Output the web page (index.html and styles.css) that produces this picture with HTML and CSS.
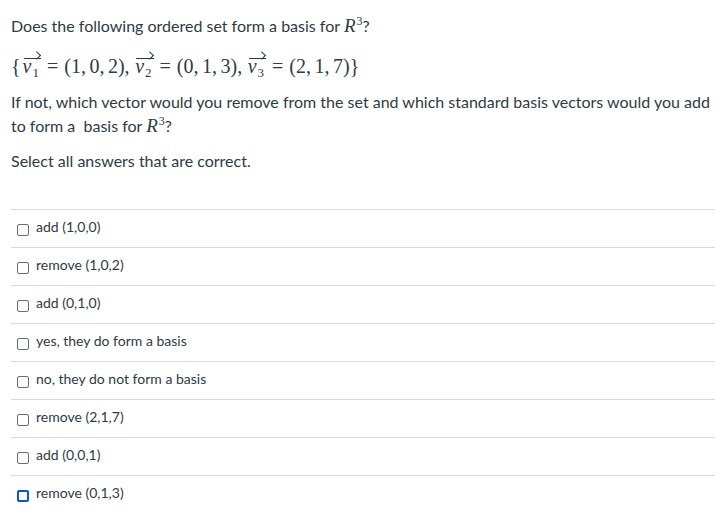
FILE: index.html
```html
<!DOCTYPE html>
<html>
<head>
<meta charset="utf-8">
<link rel="stylesheet" href="styles.css">
</head>
<body>
<div class="quiz">
  <p class="q-line">Does the following ordered set form a basis for <span class="math"><i>R</i><sup>3</sup></span>?</p>
  <p class="math-line math">{<span class="vec"><i>v</i><sub>1</sub></span><span class="eq">=</span>(1,<span class="th"></span>0,<span class="th"></span>2),<span class="th"></span><span class="vec"><i>v</i><sub>2</sub></span><span class="eq">=</span>(0,<span class="th"></span>1,<span class="th"></span>3),<span class="th"></span><span class="vec"><i>v</i><sub>3</sub></span><span class="eq">=</span>(2,<span class="th"></span>1,<span class="th"></span>7)}</p>
  <p class="q-para">If not, which vector would you remove from the set and which standard basis vectors would you add to form a&nbsp; basis for <span class="math"><i>R</i><sup>3</sup></span>?</p>
  <p class="q-select">Select all answers that are correct.</p>
  <ul class="answers">
    <li class="answer"><span class="box"></span><span class="label">add (1,0,0)</span></li>
    <li class="answer"><span class="box"></span><span class="label">remove (1,0,2)</span></li>
    <li class="answer"><span class="box"></span><span class="label">add (0,1,0)</span></li>
    <li class="answer"><span class="box"></span><span class="label">yes, they do form a basis</span></li>
    <li class="answer"><span class="box"></span><span class="label">no, they do not form a basis</span></li>
    <li class="answer"><span class="box"></span><span class="label">remove (2,1,7)</span></li>
    <li class="answer"><span class="box"></span><span class="label">add (0,0,1)</span></li>
    <li class="answer"><span class="box focus"></span><span class="label">remove (0,1,3)</span></li>
  </ul>
</div>
</body>
</html>
```

FILE: styles.css
```css
html, body {
  margin: 0;
  padding: 0;
  background: #ffffff;
}
body {
  font-family: Lato, "Liberation Sans", sans-serif;
  color: #2d3b45;
}
.quiz {
  padding: 14px 10px 0 11px;
}
p {
  margin: 0;
}
.q-line {
  font-size: 16px;
  line-height: 24px;
}
.math {
  font-family: "Liberation Serif", "DejaVu Serif", serif;
  font-size: 19px;
}
.math i {
  font-style: italic;
}
.math sup {
  font-size: 12px;
  line-height: 0;
  font-style: normal;
  margin-left: 1px;
}
.math sub {
  font-size: 13px;
  line-height: 0;
  font-style: normal;
  margin-left: 1px;
  vertical-align: -4px;
}
.math-line {
  margin-top: 16px;
  line-height: 24px;
  font-size: 20px;
  color: #2d3b45;
  white-space: nowrap;
}
.eq {
  display: inline-block;
  margin: 0 6px 0 7px;
}
.th {
  display: inline-block;
  width: 3.5px;
}
.vec {
  position: relative;
  display: inline-block;
  margin-left: 2px;
  margin-right: 1px;
}
.vec::before {
  content: "";
  position: absolute;
  left: 1px;
  right: -2px;
  top: 4px;
  border-top: 1px solid #2d3b45;
}
.vec::after {
  content: "";
  position: absolute;
  right: -2px;
  top: 1px;
  width: 5px;
  height: 5px;
  border-top: 1px solid #2d3b45;
  border-right: 1px solid #2d3b45;
  transform: translate(0, 0.5px) rotate(45deg);
  transform-origin: 100% 0;
}
.q-para {
  margin-top: 12px;
  font-size: 16px;
  line-height: 24px;
}
.q-select {
  margin-top: 11px;
  font-size: 16px;
  line-height: 24px;
}
.answers {
  list-style: none;
  margin: 36px 0 0 0;
  padding: 0;
}
.answer {
  display: flex;
  align-items: flex-start;
  height: 37px;
  border-top: 1px solid #d9dcde;
  font-size: 14px;
}
.box {
  width: 10px;
  height: 10px;
  border: 1px solid #66707a;
  border-radius: 2px;
  margin: 14px 7px 0 6px;
  flex: none;
}
.box.focus {
  width: 8px;
  height: 8px;
  border: 2px solid #0b55d4;
}
.label {
  line-height: 20px;
  margin-top: 7px;
}
```
